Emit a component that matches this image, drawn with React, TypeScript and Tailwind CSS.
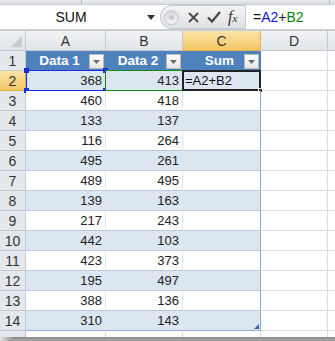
import React from "react";

const rows: [number, number][] = [
  [368, 413],
  [460, 418],
  [133, 137],
  [116, 264],
  [495, 261],
  [489, 495],
  [139, 163],
  [217, 243],
  [442, 103],
  [423, 373],
  [195, 497],
  [388, 136],
  [310, 143],
];

const font = { fontFamily: '"Liberation Sans", Arial, sans-serif' };

function DropBtn() {
  return (
    <div className="absolute right-[1px] top-[3px] w-[15px] h-[15px] border border-[#b9b9b9] bg-gradient-to-b from-[#ffffff] to-[#e6e6e6] flex items-center justify-center">
      <svg width="7" height="4" viewBox="0 0 7 4">
        <path d="M0 0 L7 0 L3.5 4 Z" fill="#6b6b6b" />
      </svg>
    </div>
  );
}

function Handle({ cls, color }: { cls: string; color: string }) {
  return <div className={`absolute w-[5px] h-[5px] ${cls}`} style={{ background: color }} />;
}

export default function App() {
  return (
    <div className="w-[335px] h-[341px] overflow-hidden bg-white text-[13px] leading-none text-[#222]" style={font}>
      <div className="h-[5px] flex bg-gradient-to-b from-[#e9ecf0] to-[#d9dde3] border-b border-[#c9cdd3]">
        <div className="w-[82px] border-r border-[#b7bcc4]" />
        <div className="w-[248px] border-r border-[#b7bcc4]" />
      </div>
      <div className="h-[24px] flex bg-white">
        <div className="w-[142px] flex items-center justify-center text-[14px] text-[#111]">SUM</div>
        <div className="w-[18px] flex items-center justify-center">
          <svg width="8" height="5" viewBox="0 0 8 5">
            <path d="M0 0 L8 0 L4 5 Z" fill="#333" />
          </svg>
        </div>
        <div className="w-[85px] flex items-center rounded-l-full bg-gradient-to-b from-[#f4f5f6] to-[#dfe1e4] border border-[#c6c9ce] border-r-0">
          <div className="w-[15px] h-[15px] ml-[3px] rounded-full bg-gradient-to-b from-[#d6d8db] to-[#f6f6f6] border border-[#c2c5ca] flex items-center justify-center">
            <div className="w-[5px] h-[5px] rounded-full bg-[#c9ccd0]" />
          </div>
          <div className="ml-[8px] w-[12px] flex justify-center">
            <svg width="11" height="11" viewBox="0 0 11 11">
              <path d="M1 1 L10 10 M10 1 L1 10" stroke="#4a4a4a" strokeWidth="1.9" />
            </svg>
          </div>
          <div className="ml-[8px] w-[14px] flex justify-center">
            <svg width="14" height="12" viewBox="0 0 14 12">
              <path d="M1 6.5 L5 10.5 L13 1" stroke="#4a4a4a" strokeWidth="2.4" fill="none" />
            </svg>
          </div>
          <div
            className="ml-[7px] text-[16px] italic text-[#333]"
            style={{ fontFamily: '"Liberation Serif", "Times New Roman", serif' }}
          >
            f<span className="text-[11px]">x</span>
          </div>
        </div>
        <div className="flex-1 border-l border-[#c6c9ce] flex items-center pl-[7px] text-[14px]">
          <span className="text-[#111]">=</span>
          <span className="text-[#1515e0]">A2</span>
          <span className="text-[#111]">+</span>
          <span className="text-[#0c800c]">B2</span>
        </div>
      </div>
      <div className="h-[2px] bg-[#c9cdd4]" />
      <div className="h-[20px] flex text-[#333] text-[14px]">
        <div className="w-[26px] border-r border-b border-[#c5cad1] bg-gradient-to-b from-[#eef0f3] to-[#e1e4e8] relative">
          <svg className="absolute right-[3px] bottom-[3px]" width="11" height="11" viewBox="0 0 11 11">
            <path d="M11 0 L11 11 L0 11 Z" fill="#c9ccd0" />
          </svg>
        </div>
        {["A", "B"].map((c, i) => (
          <div
            key={c}
            className={`${i === 0 ? "w-[80px]" : "w-[77px]"} border-r border-b border-[#c5cad1] bg-gradient-to-b from-[#f1f3f5] to-[#e2e5e9] flex items-center justify-center`}
          >
            {c}
          </div>
        ))}
        <div className="w-[78px] border-r border-b border-[#e3b44a] bg-gradient-to-b from-[#fbe3a9] to-[#f3c560] flex items-center justify-center">
          C
        </div>
        <div className="w-[67px] border-r border-b border-[#c5cad1] bg-gradient-to-b from-[#f1f3f5] to-[#e2e5e9] flex items-center justify-center">
          D
        </div>
        <div className="flex-1 border-b border-[#c5cad1] bg-gradient-to-b from-[#f1f3f5] to-[#e2e5e9]" />
      </div>
      <div className="h-[20px] flex">
        <div className="w-[26px] border-r border-b border-[#c5cad1] bg-[#e4e7eb] flex items-center justify-center text-[#333] text-[14px]">
          1
        </div>
        <div className="w-[80px] border-b border-r border-[#4f81bd] bg-[#4f81bd] relative flex items-center justify-center pr-[12px] text-white font-bold text-[13.5px]">
          Data 1
          <DropBtn />
        </div>
        <div className="w-[77px] border-b border-r border-[#4f81bd] bg-[#4f81bd] relative flex items-center justify-center pr-[12px] text-white font-bold text-[13.5px]">
          Data 2
          <DropBtn />
        </div>
        <div className="w-[78px] border-b border-r border-[#4f81bd] bg-[#4f81bd] relative flex items-center justify-center pr-[4px] text-white font-bold text-[13.5px]">
          Sum
          <DropBtn />
        </div>
        <div className="w-[67px] border-r border-b border-[#dadde1]" />
        <div className="flex-1 border-b border-[#dadde1]" />
      </div>
      {rows.map(([a, b], i) => {
        const r = i + 2;
        const band = i % 2 === 0;
        const bg = band ? "bg-[#dce6f1]" : "bg-white";
        const last = i === rows.length - 1;
        const hb = last ? "border-b-[#95b3d7]" : "border-b-[#b8c9df]";
        return (
          <div key={r} className="h-[20px] flex">
            <div
              className={`w-[26px] border-r border-b flex items-center justify-center text-[14px] ${
                r === 2
                  ? "bg-gradient-to-b from-[#fbe3a9] to-[#f3c560] border-[#e3b44a] text-[#333]"
                  : "bg-[#e4e7eb] border-[#c5cad1] text-[#333]"
              }`}
            >
              {r}
            </div>
            <div className={`w-[80px] border-b border-r border-r-[#dfe5ec] ${hb} ${bg} relative flex items-center justify-end pr-[3px]`}>
              {a}
              {r === 2 && (
                <>
                  <div className="absolute left-0 top-[-1px] w-[80px] h-[21px] border border-[#1a2ce0]" />
                  <Handle cls="left-[-2px] top-[-3px]" color="#1a2ce0" />
                  <Handle cls="right-[-3px] top-[-3px]" color="#1a2ce0" />
                  <Handle cls="left-[-2px] bottom-[-3px]" color="#1a2ce0" />
                  <Handle cls="right-[-3px] bottom-[-3px]" color="#1a2ce0" />
                </>
              )}
            </div>
            <div className={`w-[77px] border-b border-r border-r-[#dfe5ec] ${hb} ${bg} relative flex items-center justify-end pr-[3px]`}>
              {b}
              {r === 2 && <div className="absolute left-[-1px] top-[-1px] w-[78px] h-[21px] border border-[#118a11]" />}
            </div>
            <div className={`w-[78px] border-b border-r border-r-[#8fa9c9] ${hb} ${bg} relative flex items-center pl-[2px]`}>
              {r === 2 && (
                <>
                  <span className="text-[#111]">=A2+B2</span>
                  <div className="absolute left-[-1px] top-[-1px] w-[79px] h-[21px] border-2 border-[#222]" />
                  <div className="absolute right-[-3px] bottom-[-3px] w-[5px] h-[5px] bg-[#222] border border-white" />
                </>
              )}
              {last && (
                <svg className="absolute right-[1px] bottom-[1px]" width="5" height="5" viewBox="0 0 5 5">
                  <path d="M5 0 L5 5 L0 5 Z" fill="#3b5fa8" />
                </svg>
              )}
            </div>
            <div className="w-[67px] border-r border-b border-[#dadde1]" />
            <div className="flex-1 border-b border-[#dadde1]" />
          </div>
        );
      })}
      <div className="h-[6px] flex">
        <div className="w-[26px] border-r border-[#c5cad1] bg-[#e4e7eb]" />
        <div className="w-[80px] border-r border-[#dadde1]" />
        <div className="w-[77px] border-r border-[#dadde1]" />
        <div className="w-[78px] border-r border-[#dadde1]" />
        <div className="w-[67px] border-r border-[#dadde1]" />
        <div className="flex-1" />
      </div>
      <div className="h-[4px] flex">
        <div className="w-[12px] bg-gradient-to-r from-[#e8e8e8] to-[#9a9a9a]" />
        <div className="flex-1 bg-gradient-to-b from-[#8a8a8a] to-[#a8a8a8]" />
      </div>
    </div>
  );
}
